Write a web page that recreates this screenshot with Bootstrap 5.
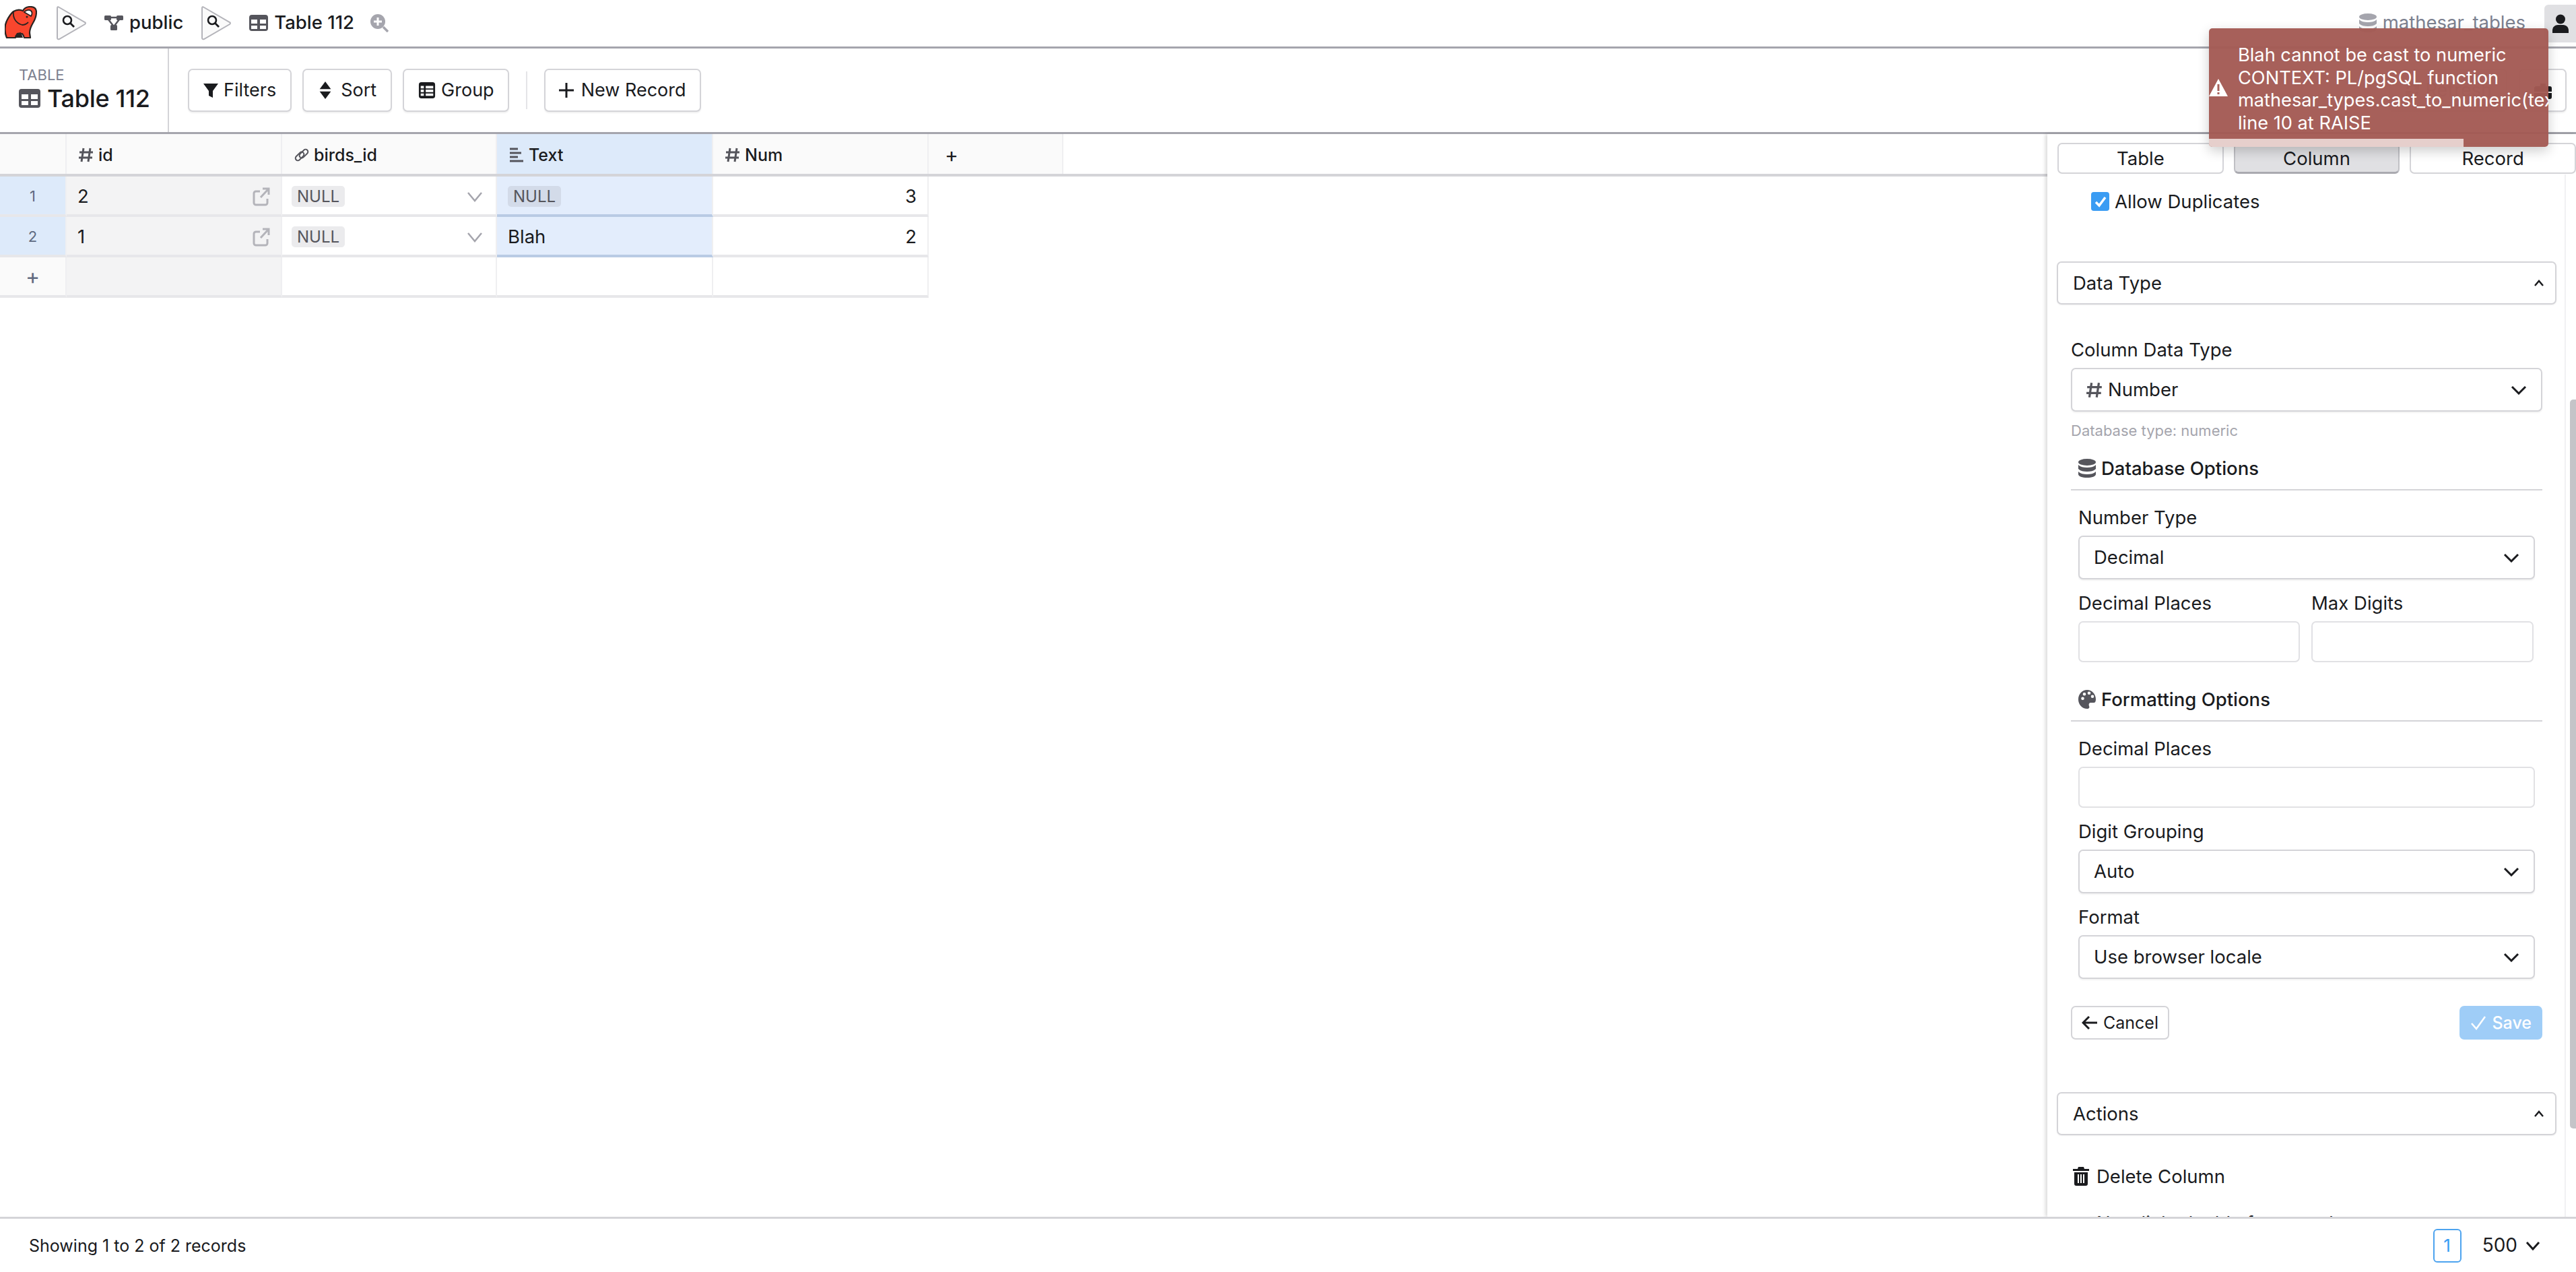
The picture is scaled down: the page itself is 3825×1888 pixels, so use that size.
<!doctype html>
<html lang="en">
<head>
<meta charset="utf-8">
<title>Table 112</title>
<link href="https://cdn.jsdelivr.net/npm/bootstrap@5.3.0/dist/css/bootstrap.min.css" rel="stylesheet">
<style>
html,body{height:100%;}
body{font-family:"Inter","Liberation Sans",sans-serif;font-size:27.5px;line-height:1.2;color:#1a1b1e;background:#fff;overflow:hidden;}
svg{display:block;flex:none;fill:currentColor;}
.app-shell{height:1888px;width:3825px;position:relative;overflow:hidden;}
.top-bar{height:72px;border-bottom:3px solid #a5a5ad;padding-left:7px;padding-bottom:2px;font-weight:500;}
.logo-mark{width:48px;height:49px;margin-right:28px;}
.crumb-arrow{width:46px;height:52px;margin-right:26px;}
.crumb-icon{width:28px;height:26px;color:#55555c;}
.crumb-item{margin-right:26px;gap:9px;}
.crumb-add{width:28px;height:28px;color:#a5a5ad;margin-left:-3px;}
.db-name{color:#7c8190;gap:9px;margin-right:28px;font-weight:400;}
.db-name svg{width:26px;height:28px;color:#a5a5ad;}
.user-btn{width:47px;height:56px;background:#e0e0e3;border-radius:6px 0 0 6px;align-self:flex-start;margin-top:7px;}
.user-btn svg{width:26px;height:28px;}
.tool-bar{height:127px;border-bottom:3px solid #a5a5ad;}
.title-block{width:251px;height:100%;border-right:2px solid #d4d4d8;padding:26px 0 0 28px;}
.title-kicker{font-size:22px;line-height:26px;color:#7c8190;}
.title-main{font-size:36px;font-weight:500;line-height:44px;gap:10px;letter-spacing:-.3px;}
.title-main svg{width:32px;height:30px;color:#55555c;}
.tool-row{padding-left:28px;gap:16px;}
.tool-btn{height:64px;border:2px solid #d4d4d8;border-radius:7px;background:#fff;box-shadow:0 2px 2px rgba(0,0,0,.06);padding:0 21px;gap:8px;font-size:27px;color:#1a1b1e;display:inline-flex;align-items:center;font-weight:400;white-space:nowrap;}
.tool-btn svg{width:22px;height:26px;}
.tool-wide-gap{gap:12px;}
.tool-group{padding-right:20px;}
.tool-new{gap:11px;padding:0 20px;}
.btn-sep{width:2px;height:56px;background:#e4e4e7;margin:0 9px;}
.tool-right{margin-left:auto;gap:17px;padding-right:14px;color:#a5a5ad;}
.tool-right .tool-btn{color:#a5a5ad;}
.work-area{height:1607px;}
.grid-area{width:3040px;flex:none;}
.grid-row{display:flex;height:60px;font-size:27.5px;}
.grid-head{height:63px;border-bottom:4px solid #d4d4d8;width:3040px;}
.grid-head .cell{background:#fafafa;font-weight:500;padding-left:18px;padding-top:2px;gap:7px;font-size:25px;border-right:2px solid #efeff1;border-bottom:0;}
.grid-head .cell svg{width:22px;height:24px;color:#55555c;}
.cell{display:flex;align-items:center;height:100%;flex:none;width:320px;padding:3px 16px 0;border-right:2px solid #efeff1;border-bottom:4px solid #e7e7ea;background:#fff;}
.cell-w99{width:99px;}
.cell-w319{width:319px;}
.cell-w321{width:321px;}
.cell-plus{width:200px;font-weight:400!important;font-size:30px!important;padding-left:24px!important;}
.num-cell{width:99px;justify-content:center;font-size:22px;color:#5f6a80;background:#ddeafa;padding:3px 0 0;}
.id-cell{background:#f3f3f4;justify-content:space-between;}
.fk-cell{justify-content:space-between;padding-left:14px;}
.sel-cell{background:#e3edfc;border-bottom-color:#b9cbe4;}
.right-cell{justify-content:flex-end;}
.add-cell{background:#fafafa;color:#5f6a80;font-size:32px;}
.head-sel{background:#ddeafa!important;}
.null-tag{font-size:24px;line-height:31px;padding:0 8px;background:#ebebed;color:#55555c;border-radius:5px;}
.null-dark{background:#d3dbe9;}
.open-ico{width:26px;height:28px;color:#b4b4ba;}
.fk-chevron{width:24px;height:16px;color:#a5a5ad;margin-right:3px;}
.side-panel{width:785px;flex:none;position:relative;box-shadow:-3px 0 5px rgba(0,0,0,.14);height:100%;background:#fff;overflow:hidden;}
.tab-row{padding:13px 0 0 15px;gap:15px;height:60px;}
.tab-pill{width:247px;height:46px;border:2px solid #d4d4d8;border-radius:7px;background:#fff;font-size:27.5px;line-height:42px;text-align:center;padding:0;color:#1a1b1e;}
.tab-on{background:#e0e0e3;border-color:#c0c0c5;border-bottom:3px solid #aaaab0;}
.panel-scroll{width:770px;height:1547px;border-right:2px solid #f1f1f3;padding:25px 12px 0 14px;overflow:hidden;}
.check-line{padding-left:51px;gap:8px;height:30px;margin-bottom:74px;}
.check-box{width:27px;height:28px;border-radius:4px;background:#3a9cf3;color:#fff;}
.check-box svg{width:20px;height:20px;}
.fold-head{height:64px;border:2px solid #d4d4d8;border-radius:7px;box-shadow:0 1px 2px rgba(0,0,0,.06);padding:0 16px 0 22px;justify-content:space-between;}
.fold-head svg{width:16px;height:12px;}
.fold-second{margin-top:78px;}
.fold-body{padding:0 21px;}
.field-label{height:34px;margin-bottom:10px;line-height:34px;}
.field-first{margin-top:50px;}
.field-next{margin-top:18px;}
.pick-box{height:65px;border:2px solid #d4d4d8;border-radius:7px;padding:0 21px;background:#fff;box-shadow:0 2px 2px rgba(0,0,0,.05);justify-content:space-between;gap:8px;}
.pick-box .pick-chev{width:24px;height:14px;}
.hash-ico{width:24px;height:26px;color:#55555c;}
.text-box{height:61px;border:2px solid #e1e1e4;border-radius:7px;background:#fff;}
.hint-text{font-size:22px;line-height:28px;color:#a5a5ad;margin-top:14px;}
.section-title{font-weight:500;gap:8px;padding:0 11px;height:34px;}
.section-title svg{width:26px;height:28px;color:#55555c;}
.section-db{margin-top:25px;}
.section-fmt{margin-top:38px;}
.section-rule{height:2px;background:#d4d4d8;margin:14px 0 23px;}
.section-inner{padding:0 11px;}
.two-up{display:grid;grid-template-columns:329px 330px;gap:17px;margin-top:18px;}
.form-actions{margin-top:40px;}
.act-btn{height:50px;border:2px solid #d4d4d8;border-radius:7px;background:#fff;padding:0 14px;gap:8px;font-size:25px;display:inline-flex;align-items:center;color:#1a1b1e;}
.act-btn svg{width:24px;height:22px;}
.save-btn{background:#9fcdf7;border-color:#9fcdf7;color:#fff;font-weight:500;}
.act-line{gap:11px;padding-left:3px;height:34px;}
.act-line svg{width:24px;height:28px;}
.act-first{margin-top:44px;}
.act-next{margin-top:35px;}
.scroll-thumb{position:absolute;right:0;top:394px;width:9px;height:1082px;background:#c4c4c8;border-radius:5px 0 0 5px;}
.foot-bar{height:82px;border-top:3px solid #d4d4d8;background:#fff;position:relative;z-index:3;padding:0 53px 0 43px;font-size:25px;}
.page-num{width:42px;height:50px;border:2px solid #4da3ef;border-radius:6px;color:#3a9cf3;font-size:26px;}
.page-size{gap:12px;margin-left:31px;font-size:28px;}
.page-size svg{width:22px;height:14px;}
.err-toast{position:absolute;left:3280px;top:42px;width:504px;height:176px;background:rgba(163,90,83,.96);color:#fff;border-radius:5px;box-shadow:0 6px 18px rgba(0,0,0,.2);overflow:hidden;z-index:5;}
.err-ico{width:28px;height:26px;flex:none;}
.err-text{padding:23px 0 0 43px;line-height:33.6px;white-space:nowrap;font-size:27.2px;}
.err-progress{position:absolute;left:0;bottom:0;height:12px;width:378px;background:#e6cfcc;}
.err-glyph{position:absolute;left:0;top:75px;}
</style>
</head>
<body>
<div class="app-shell d-flex flex-column">
  <header class="top-bar d-flex align-items-center flex-none">
    <svg class="logo-mark" viewBox="0 0 48 49"><path d="M3 47C0 40-1 30 3 22C6 16 9 11 13 8C18 5 23 5 27 7C29 3 33 1 38 1C44 1 47 4 47 9C47 15 45 20 42 25C39 30 37 35 37 40L38 47L29 47C28 44 27 42 26 41C23 42 21 42 19 41C17 43 16 45 16 47Z" fill="#f9462e" stroke="#2a2422" stroke-width="2.200" stroke-linejoin="round"/><path d="M29 9C31 6 36 5 39 7C41 9 41 12 39 15C36 13 32 11 29 9Z" fill="#fff" stroke="#2a2422" stroke-width="1.800"/><path d="M13 8C12 16 15 25 26 28C30 28 33 26 35 24" fill="none" stroke="#2a2422" stroke-width="1.800"/><circle cx="33" cy="16" r="1.500" fill="#2a2422"/><path d="M16 47L18 40L24 39L27 47Z" fill="#2a2422"/></svg>
    <svg class="crumb-arrow" viewBox="0 0 46 52"><path d="M2 4Q2 1 5 3L43 25Q45 26 43 28L5 50Q2 51 2 48Z" fill="#fafafa" stroke="#b4b4ba" stroke-width="2"/><circle cx="17" cy="22" r="6" fill="none" stroke="#1a1b1e" stroke-width="2.6"/><path d="M21.500 26.500L27 32" stroke="#1a1b1e" stroke-width="2.8"/></svg>
    <div class="crumb-item d-flex align-items-center">
      <svg class="crumb-icon" viewBox="0 0 28 26"><rect x="0" y="2" width="10" height="7" rx="1.500"/><rect x="18" y="2" width="10" height="7" rx="1.500"/><rect x="9" y="16" width="10" height="8" rx="1.500"/><path d="M9 5h10M6 8l7 9M22 8l-7 9" stroke="currentColor" stroke-width="2.500" fill="none"/></svg>
      <span>public</span>
    </div>
    <svg class="crumb-arrow" viewBox="0 0 46 52"><path d="M2 4Q2 1 5 3L43 25Q45 26 43 28L5 50Q2 51 2 48Z" fill="#fafafa" stroke="#b4b4ba" stroke-width="2"/><circle cx="17" cy="22" r="6" fill="none" stroke="#1a1b1e" stroke-width="2.6"/><path d="M21.500 26.500L27 32" stroke="#1a1b1e" stroke-width="2.8"/></svg>
    <div class="crumb-item d-flex align-items-center">
      <svg class="crumb-icon" viewBox="0 0 28 26"><path fill-rule="evenodd" d="M4 1h20a4 4 0 0 1 4 4v16a4 4 0 0 1-4 4H4a4 4 0 0 1-4-4V5a4 4 0 0 1 4-4ZM3 8v6h9V8ZM16 8v6h9V8ZM3 17v5h9v-5ZM16 17v5h9v-5Z"/></svg>
      <span>Table 112</span>
    </div>
    <svg class="crumb-add" viewBox="0 0 28 28"><circle cx="12" cy="12" r="11"/><path d="M12 6v12M6 12h12" stroke="#fff" stroke-width="3"/><path d="M20 20l7 7" stroke="currentColor" stroke-width="3.500"/></svg>
    <div class="ms-auto d-flex align-items-center db-name">
      <svg viewBox="0 0 26 28"><ellipse cx="13" cy="5" rx="13" ry="5"/><path d="M0 9c3 3 8 4 13 4s10-1 13-4v6c-3 3-8 4-13 4S3 18 0 15ZM0 19c3 3 8 4 13 4s10-1 13-4v4c0 3-6 5-13 5S0 26 0 23Z"/></svg>
      <span>mathesar_tables</span>
    </div>
    <div class="user-btn d-flex align-items-center justify-content-center">
      <svg viewBox="0 0 26 28"><circle cx="13" cy="7.500" r="7"/><path d="M1 28v-4c0-5 4-8 8-8h8c4 0 8 3 8 8v4Z"/></svg>
    </div>
  </header>

  <section class="tool-bar d-flex align-items-stretch flex-none">
    <div class="title-block">
      <div class="title-kicker">TABLE</div>
      <div class="title-main d-flex align-items-center">
        <svg viewBox="0 0 32 30"><path fill-rule="evenodd" d="M4 1h24a4 4 0 0 1 4 4v20a4 4 0 0 1-4 4H4a4 4 0 0 1-4-4V5a4 4 0 0 1 4-4ZM4 9v7h10V9ZM18 9v7h10V9ZM4 19v6h10v-6ZM18 19v6h10v-6Z"/></svg>
        <span>Table 112</span>
      </div>
    </div>
    <div class="tool-row d-flex align-items-center flex-grow-1">
      <button class="tool-btn" type="button"><svg viewBox="0 0 22 26"><path d="M0 3h22L14 14v10l-6-3v-7Z"/></svg>Filters</button>
      <button class="tool-btn tool-wide-gap" type="button"><svg viewBox="0 0 22 28"><path d="M11 0l9 12H2ZM11 28L2 16h18Z"/></svg>Sort</button>
      <button class="tool-btn tool-group" type="button"><svg viewBox="0 0 26 28" style="width:26px"><path fill-rule="evenodd" d="M4 1h18a4 4 0 0 1 4 4v18a4 4 0 0 1-4 4H4a4 4 0 0 1-4-4V5a4 4 0 0 1 4-4ZM3 7v4h5V7ZM11 7v4h12V7ZM3 13v4h5v-4ZM11 13v4h12v-4ZM3 19v4h5v-4ZM11 19v4h12v-4Z"/></svg>Group</button>
      <span class="btn-sep"></span>
      <button class="tool-btn tool-new" type="button"><svg viewBox="0 0 22 26"><path d="M11 2v22M0 13h22" stroke="currentColor" stroke-width="3"/></svg>New Record</button>
      <div class="tool-right d-flex align-items-center">
        <button class="tool-btn" type="button"><svg viewBox="0 0 24 26" style="width:24px"><path d="M3 11a9 9 0 0 1 16-5l3-3v9h-9l3-3a5 5 0 0 0-9 2ZM21 15a9 9 0 0 1-16 5l-3 3v-9h9l-3 3a5 5 0 0 0 9-2Z"/></svg>Refresh</button>
        <button class="tool-btn" type="button" style="width:71px;padding:0;justify-content:center;color:#1a1b1e"><svg viewBox="0 0 26 26" style="width:26px"><path d="M9 3h8v4h6a3 3 0 0 1 3 3v5H0v-5a3 3 0 0 1 3-3h6ZM0 17h26v6a3 3 0 0 1-3 3H3a3 3 0 0 1-3-3Z"/></svg></button>
      </div>
    </div>
  </section>

  <main class="work-area d-flex flex-none">
    <div class="grid-area">
      <div class="grid-row grid-head">
        <div class="cell cell-w99"></div>
        <div class="cell"><svg viewBox="0 0 22 24"><path d="M7 2L4 22M17 2l-3 20M1 8h20M0 16h20" stroke="currentColor" stroke-width="3" fill="none"/></svg>id</div>
        <div class="cell cell-w319"><svg viewBox="0 0 22 24"><g fill="none" stroke="currentColor" stroke-width="2"><rect x="-6" y="-3.500" width="15" height="7" rx="3.500" transform="translate(7 15) rotate(-45)"/><rect x="-9" y="-3.500" width="15" height="7" rx="3.500" transform="translate(15 9) rotate(-45)"/></g></svg>birds_id</div>
        <div class="cell cell-w321 head-sel"><svg viewBox="0 0 22 24"><path d="M1 3h12M1 9h17M1 15h12M1 21h20" stroke="currentColor" stroke-width="3"/></svg>Text</div>
        <div class="cell"><svg viewBox="0 0 22 24"><path d="M7 2L4 22M17 2l-3 20M1 8h20M0 16h20" stroke="currentColor" stroke-width="3" fill="none"/></svg>Num</div>
        <div class="cell cell-plus">+</div>
      </div>
      <div class="grid-row">
        <div class="cell num-cell">1</div>
        <div class="cell id-cell">2<svg class="open-ico" viewBox="0 0 26 28"><path d="M11 6H5a3 3 0 0 0-3 3v14a3 3 0 0 0 3 3h14a3 3 0 0 0 3-3v-6M15 2h9v9M24 2L12 15" fill="none" stroke="currentColor" stroke-width="3"/></svg></div>
        <div class="cell fk-cell cell-w319"><span class="null-tag">NULL</span><svg class="fk-chevron" viewBox="0 0 24 16"><path d="M2 2l10 12L22 2" fill="none" stroke="currentColor" stroke-width="2.500"/></svg></div>
        <div class="cell cell-w321 sel-cell"><span class="null-tag null-dark">NULL</span></div>
        <div class="cell right-cell">3</div>
      </div>
      <div class="grid-row">
        <div class="cell num-cell">2</div>
        <div class="cell id-cell">1<svg class="open-ico" viewBox="0 0 26 28"><path d="M11 6H5a3 3 0 0 0-3 3v14a3 3 0 0 0 3 3h14a3 3 0 0 0 3-3v-6M15 2h9v9M24 2L12 15" fill="none" stroke="currentColor" stroke-width="3"/></svg></div>
        <div class="cell fk-cell cell-w319"><span class="null-tag">NULL</span><svg class="fk-chevron" viewBox="0 0 24 16"><path d="M2 2l10 12L22 2" fill="none" stroke="currentColor" stroke-width="2.500"/></svg></div>
        <div class="cell cell-w321 sel-cell">Blah</div>
        <div class="cell right-cell">2</div>
      </div>
      <div class="grid-row">
        <div class="cell num-cell add-cell">+</div>
        <div class="cell id-cell"></div>
        <div class="cell cell-w319"></div>
        <div class="cell cell-w321"></div>
        <div class="cell"></div>
      </div>
    </div>

    <aside class="side-panel">
      <div class="tab-row d-flex">
        <button class="tab-pill" type="button">Table</button>
        <button class="tab-pill tab-on" type="button">Column</button>
        <button class="tab-pill" type="button">Record</button>
      </div>
      <div class="panel-scroll">
        <div class="check-line d-flex align-items-center">
          <span class="check-box d-flex align-items-center justify-content-center"><svg viewBox="0 0 20 20"><path d="M3 11l5 5 9-12" fill="none" stroke="currentColor" stroke-width="3.500"/></svg></span>
          <span>Allow Duplicates</span>
        </div>

        <div class="fold-head d-flex align-items-center"><span>Data Type</span><svg viewBox="0 0 16 12"><path d="M2 10l6-7 6 7" fill="none" stroke="currentColor" stroke-width="2.500"/></svg></div>
        <div class="fold-body">
          <div class="field-label field-first">Column Data Type</div>
          <div class="pick-box d-flex align-items-center">
            <span class="d-flex align-items-center gap-2"><svg class="hash-ico" viewBox="0 0 22 24"><path d="M7 2L4 22M17 2l-3 20M1 8h20M0 16h20" stroke="currentColor" stroke-width="3" fill="none"/></svg>Number</span>
            <svg class="pick-chev" viewBox="0 0 24 14"><path d="M2 2l10 10L22 2" fill="none" stroke="currentColor" stroke-width="3"/></svg>
          </div>
          <div class="hint-text">Database type: numeric</div>

          <div class="section-title section-db d-flex align-items-center">
            <svg viewBox="0 0 26 28"><ellipse cx="13" cy="5" rx="13" ry="5"/><path d="M0 9c3 3 8 4 13 4s10-1 13-4v6c-3 3-8 4-13 4S3 18 0 15ZM0 19c3 3 8 4 13 4s10-1 13-4v4c0 3-6 5-13 5S0 26 0 23Z"/></svg>
            <span>Database Options</span>
          </div>
          <div class="section-rule"></div>
          <div class="section-inner">
            <div class="field-label">Number Type</div>
            <div class="pick-box d-flex align-items-center"><span>Decimal</span><svg class="pick-chev" viewBox="0 0 24 14"><path d="M2 2l10 10L22 2" fill="none" stroke="currentColor" stroke-width="3"/></svg></div>
            <div class="two-up">
              <div><div class="field-label">Decimal Places</div><div class="text-box"></div></div>
              <div><div class="field-label">Max Digits</div><div class="text-box"></div></div>
            </div>
          </div>

          <div class="section-title section-fmt d-flex align-items-center">
            <svg viewBox="0 0 26 28"><path fill-rule="evenodd" d="M13 0C6 0 0 6 0 14s6 14 13 14c3 0 4-2 3-4-1-3 0-5 3-5h4c2 0 3-2 3-5C26 6 20 0 13 0ZM6.500 15a2.300 2.300 0 1 0 0-4.600 2.300 2.300 0 0 0 0 4.600ZM9 8.500a2.300 2.300 0 1 0 0-4.600 2.300 2.300 0 0 0 0 4.600ZM16 7a2.300 2.300 0 1 0 0-4.600A2.300 2.300 0 0 0 16 7ZM21 12a2.300 2.300 0 1 0 0-4.600 2.300 2.300 0 0 0 0 4.600Z"/></svg>
            <span>Formatting Options</span>
          </div>
          <div class="section-rule"></div>
          <div class="section-inner">
            <div class="field-label">Decimal Places</div>
            <div class="text-box"></div>
            <div class="field-label field-next">Digit Grouping</div>
            <div class="pick-box d-flex align-items-center"><span>Auto</span><svg class="pick-chev" viewBox="0 0 24 14"><path d="M2 2l10 10L22 2" fill="none" stroke="currentColor" stroke-width="3"/></svg></div>
            <div class="field-label field-next">Format</div>
            <div class="pick-box d-flex align-items-center"><span>Use browser locale</span><svg class="pick-chev" viewBox="0 0 24 14"><path d="M2 2l10 10L22 2" fill="none" stroke="currentColor" stroke-width="3"/></svg></div>
          </div>
          <div class="form-actions d-flex justify-content-between">
            <button class="act-btn" type="button"><svg viewBox="0 0 24 22"><path d="M11 2L2 11l9 9M2 11h21" fill="none" stroke="currentColor" stroke-width="3"/></svg>Cancel</button>
            <button class="act-btn save-btn" type="button"><svg viewBox="0 0 24 22"><path d="M2 12l7 8L22 2" fill="none" stroke="currentColor" stroke-width="2.500"/></svg>Save</button>
          </div>
        </div>

        <div class="fold-head fold-second d-flex align-items-center"><span>Actions</span><svg viewBox="0 0 16 12"><path d="M2 10l6-7 6 7" fill="none" stroke="currentColor" stroke-width="2.500"/></svg></div>
        <div class="fold-body">
          <div class="act-line act-first d-flex align-items-center">
            <svg viewBox="0 0 24 28"><path fill-rule="evenodd" d="M8 0h8l1 3h7v3H0V3h7ZM2 8h20v17a3 3 0 0 1-3 3H5a3 3 0 0 1-3-3ZM7 11v13h2V11ZM11 11v13h2V11ZM15 11v13h2V11Z"/></svg>
            <span>Delete Column</span>
          </div>
          <div class="act-line act-next d-flex align-items-center">
            <svg viewBox="0 0 24 28"><path d="M5 14a6 6 0 0 1 6-6h8a5 5 0 0 1 0 10h-4M19 20a6 6 0 0 1-6 4H5a5 5 0 0 1 0-10h3" fill="none" stroke="currentColor" stroke-width="3"/></svg>
            <span>New linked table for record</span>
          </div>
        </div>
      </div>
      <div class="scroll-thumb"></div>
    </aside>
  </main>

  <footer class="foot-bar d-flex align-items-center justify-content-between flex-none">
    <span>Showing 1 to 2 of 2 records</span>
    <div class="d-flex align-items-center">
      <span class="page-num d-flex align-items-center justify-content-center">1</span>
      <span class="page-size d-flex align-items-center">500<svg viewBox="0 0 22 14"><path d="M2 2l9 10 9-10" fill="none" stroke="currentColor" stroke-width="3"/></svg></span>
    </div>
  </footer>

  <div class="err-toast" role="alert">
    <svg class="err-ico err-glyph" viewBox="0 0 28 26"><path fill-rule="evenodd" d="M14 0L28 26H0ZM12.500 8v10h3V8ZM12.500 20v3h3v-3Z" fill="#fff"/></svg>
    <div class="err-text">Blah cannot be cast to numeric<br>CONTEXT: PL/pgSQL function<br>mathesar_types.cast_to_numeric(text)<br>line 10 at RAISE</div>
    <div class="err-progress"></div>
  </div>
</div>
<script src="https://cdn.jsdelivr.net/npm/bootstrap@5.3.0/dist/js/bootstrap.bundle.min.js"></script>
</body>
</html>
